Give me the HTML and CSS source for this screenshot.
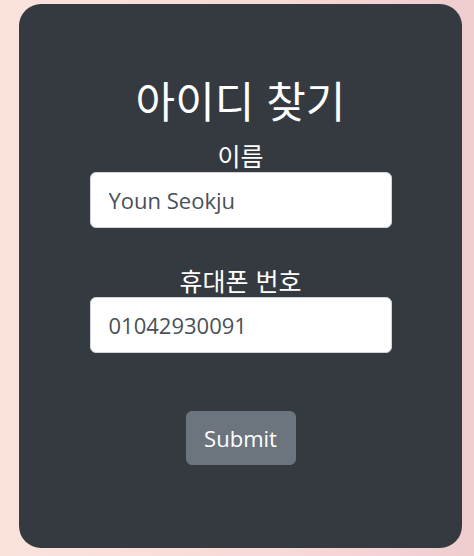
FILE: index.html
```html
<!DOCTYPE html>
<html lang="ko">
<head>
  <meta charset="UTF-8">
  <meta name="viewport" content="width=device-width, initial-scale=1.0">
  <title>아이디 찾기</title>
  <link rel="stylesheet" href="styles.css">
</head>
<body>

  <div class="card">
    <h1 class="title">아이디 찾기</h1>

    <form class="find-form" onsubmit="return false">
      <div class="form-group">
        <label class="form-label" for="userName">이름</label>
        <input class="form-input" type="text" id="userName" value="Youn Seokju">
      </div>

      <div class="form-group">
        <label class="form-label" for="userPhone">휴대폰 번호</label>
        <input class="form-input" type="text" id="userPhone" value="01042930091">
      </div>

      <button class="submit-button" type="submit">Submit</button>
    </form>
  </div>

</body>
</html>
```

FILE: styles.css
```css
body {
  margin: 0;
  padding: 4px 12px 8px 19px;
  height: 556px;
  box-sizing: border-box;
  overflow: hidden;
  background: linear-gradient(90deg, #fbe3dc, #f7d9d7 60%, #efcdcf);
  font-family: "Open Sans", "Noto Sans CJK KR", sans-serif;
}

.card {
  height: 100%;
  background-color: #343a40;
  border-radius: 22px;
  padding-top: 70px;
  box-sizing: border-box;
  display: flex;
  flex-direction: column;
  align-items: center;
  color: white;
}

.title {
  margin: 0;
  font-family: "Noto Sans CJK KR", sans-serif;
  font-size: 43px;
  font-weight: 400;
  line-height: 50px;
}

.find-form {
  display: flex;
  flex-direction: column;
  align-items: center;
  margin-top: 16px;
}

.form-group {
  display: flex;
  flex-direction: column;
  align-items: center;
  margin-bottom: 37px;
}

.form-label {
  font-family: "Noto Sans CJK KR", sans-serif;
  font-size: 25px;
  line-height: 30px;
  margin-bottom: 2px;
}

.form-input {
  width: 302px;
  height: 56px;
  box-sizing: border-box;
  padding: 0 18px;
  font-family: "Open Sans", sans-serif;
  font-size: 22px;
  color: #495057;
  background-color: white;
  border: 1px solid #ced4da;
  border-radius: 6px;
  outline: none;
}

.submit-button {
  margin-top: 21px;
  width: 110px;
  height: 54px;
  padding: 0;
  font-family: "Open Sans", sans-serif;
  font-size: 22px;
  color: white;
  background-color: #6c757d;
  border: 1px solid #6c757d;
  border-radius: 6px;
  cursor: pointer;
}
```
